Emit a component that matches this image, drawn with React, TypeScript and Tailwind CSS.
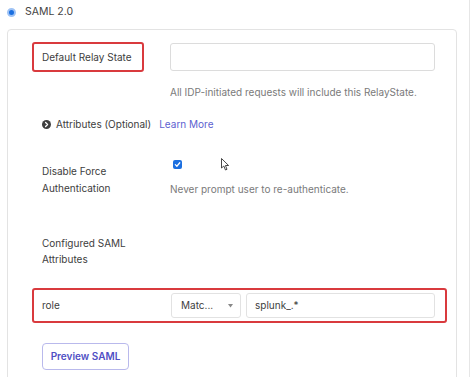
import React from 'react';

const font = { fontFamily: 'Inter, "Noto Sans", sans-serif' };

function ChevronDot() {
  return (
    <svg width="9" height="9" viewBox="0 0 10 10" className="shrink-0">
      <circle cx="5" cy="5" r="5" fill="#3f3f3f" />
      <path d="M4 2.8 L6.2 5 L4 7.2" stroke="#fff" strokeWidth="1.4" fill="none" strokeLinecap="round" strokeLinejoin="round" />
    </svg>
  );
}

function Pointer() {
  return (
    <svg width="9" height="13" viewBox="0 0 9 13" className="absolute left-[221px] top-[158px]">
      <path d="M0.5 0.5 L0.5 10 L2.8 8 L4.5 12 L6 11.3 L4.4 7.5 L7.6 7.5 Z" fill="#fff" stroke="#333" strokeWidth="0.9" strokeLinejoin="round" />
    </svg>
  );
}

export default function App() {
  return (
    <div className="relative w-[474px] h-[377px] overflow-hidden bg-white text-[10px] text-[#3d3d3d]" style={font}>
      {/* right edge separator */}
      <div className="absolute right-[4px] top-0 h-full w-px bg-[#e6e6e6]" />
      <Pointer />

      <div className="flex items-center h-[29px] pl-[7px] pb-[5px]">
        <span className="w-[9px] h-[9px] rounded-full bg-[#1b6fe0] border-[2px] border-[#9fc3f5] shrink-0" />
        <span className="ml-[9px] text-[10.5px] text-[#444]">SAML 2.0</span>
      </div>

      <div className="ml-[7px] w-[450px] h-[360px] border border-[#e3e3e3] rounded-[4px] pl-[24px]">
        {/* Default Relay State */}
        <div className="flex mt-[12px]">
          <div className="w-[112px] h-[30px] shrink-0 border-2 border-[#d93a3e] rounded-[3px] flex items-center pl-[8px]">
            Default Relay State
          </div>
          <div className="ml-[26px] mt-[1px]">
            <div className="w-[265px] h-[28px] border border-[#dcdcdc] rounded-[3px] bg-white" />
            <div className="mt-[14px] leading-[14px] text-[#7a7a7a]">All IDP-initiated requests will include this RelayState.</div>
          </div>
        </div>

        {/* Attributes */}
        <div className="flex items-center gap-[5px] mt-[18px] ml-[10px] h-[14px]">
          <ChevronDot />
          <span>Attributes (Optional)</span>
          <span className="ml-[3px] text-[#5d5fd0]">Learn More</span>
        </div>

        {/* Disable Force Authentication */}
        <div className="flex mt-[30px]">
          <div className="w-[138px] shrink-0 pl-[10px] leading-[17px] mt-[2px]">
            <div>Disable Force</div>
            <div>Authentication</div>
          </div>
          <div>
            <span className="ml-[3px] mt-[-1px] w-[9px] h-[9px] rounded-[2px] bg-[#1b6fe0] flex items-center justify-center">
              <svg width="7" height="7" viewBox="0 0 8 8">
                <path d="M1.5 4.2 L3.3 6 L6.6 2" stroke="#fff" strokeWidth="1.4" fill="none" strokeLinecap="round" strokeLinejoin="round" />
              </svg>
            </span>
            <div className="mt-[13px] leading-[14px] text-[#7a7a7a]">Never prompt user to re-authenticate.</div>
          </div>
        </div>

        {/* Configured SAML Attributes */}
        <div className="mt-[38px] pl-[10px] leading-[16px]">
          <div>Configured SAML</div>
          <div>Attributes</div>
        </div>

        {/* role row */}
        <div className="mt-[21px] w-[415px] h-[35px] border-2 border-[#d93a3e] rounded-[3px] flex items-center pl-[8px]">
          <span className="w-[129px] shrink-0">role</span>
          <div className="w-[70px] h-[25px] shrink-0 border border-[#e2e2e2] rounded-[3px] flex items-center justify-between pl-[9px] pr-[7px]">
            <span>Matc...</span>
            <svg width="5" height="4" viewBox="0 0 5 4">
              <path d="M0 0 L5 0 L2.5 3.5 Z" fill="#888" />
            </svg>
          </div>
          <div className="ml-[5px] w-[189px] h-[25px] shrink-0 border border-[#e2e2e2] rounded-[3px] flex items-center pl-[8px]">
            splunk_.*
          </div>
        </div>

        {/* Preview */}
        <button className="mt-[20px] ml-[10px] w-[87px] h-[27px] border border-[#b9b9ec] rounded-[4px] text-[#4f4fc4] font-semibold flex items-center justify-center bg-white">
          Preview SAML
        </button>
      </div>
    </div>
  );
}
